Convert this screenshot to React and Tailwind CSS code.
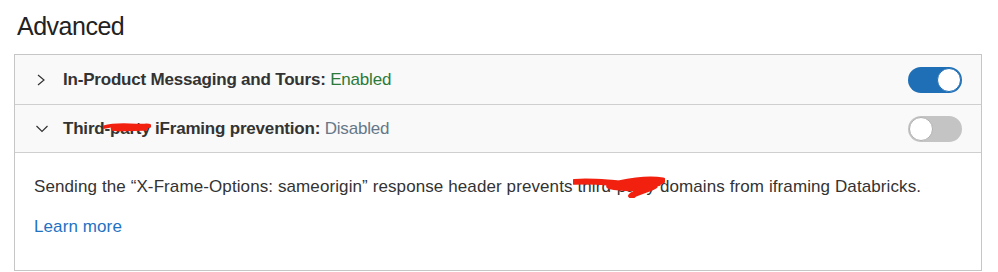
import { useState } from 'react';

function Toggle({ on }) {
  return (
    <div
      className={`w-[54px] h-[26px] rounded-full relative shrink-0 ${
        on ? 'bg-[#1f6fb6]' : 'bg-[#c4c4c4]'
      }`}
    >
      <div
        className={`absolute top-[1px] w-[24px] h-[24px] rounded-full bg-white border ${
          on ? 'right-[1px] border-[#1f6fb6]' : 'left-[1px] border-[#b0b0b0]'
        }`}
      />
    </div>
  );
}

function Scribble({ className, heavy }) {
  return (
    <svg className={`absolute pointer-events-none ${className}`} viewBox="0 0 100 30" preserveAspectRatio="none">
      {heavy ? (
        <path
          d="M2 8 C 20 6, 35 9, 50 10 C 65 6, 85 3, 97 6 C 90 12, 70 14, 40 14 C 55 18, 75 17, 88 14 C 80 20, 68 22, 64 27 M55 12 C 70 10, 85 9, 92 10"
          fill="none"
          stroke="#f2200f"
          strokeWidth="8"
          strokeLinecap="round"
          strokeLinejoin="round"
        />
      ) : (
        <path
          d="M2 12 C 20 6, 45 6, 70 8 C 85 9, 95 6, 98 9 C 80 14, 50 13, 20 16 C 40 19, 70 17, 90 16"
          fill="none"
          stroke="#f2200f"
          strokeWidth="8"
          strokeLinecap="round"
          strokeLinejoin="round"
        />
      )}
    </svg>
  );
}

function Chevron({ open }) {
  return (
    <svg width="12" height="12" viewBox="0 0 12 12" className="shrink-0">
      {open ? (
        <path d="M0.5 3 L6 8.5 L11.5 3" fill="none" stroke="#333" strokeWidth="1.2" />
      ) : (
        <path d="M2 1 L8 6 L2 11" fill="none" stroke="#333" strokeWidth="1.2" />
      )}
    </svg>
  );
}

export default function App() {
  const [rows] = useState([
    { title: 'In-Product Messaging and Tours', status: 'Enabled', on: true, open: false },
    { title: 'Third-party iFraming prevention', status: 'Disabled', on: false, open: true },
  ]);

  return (
    <div className="w-[998px] h-[272px] bg-white pl-[14px] pr-[16px] pt-[10px] font-['Liberation_Sans',Arial,sans-serif] text-[#333]">
      <h2 className="text-[25px] font-light leading-[32px] pl-[3px] text-[#222] tracking-[-0.5px]">Advanced</h2>
      <div className="mt-[12px] border border-[#c6c6c6] h-[217px]">
        {rows.map((r, i) => (
          <div key={i}>
            <div
              className={`h-[49px] bg-[#f9f9f9] flex items-center pl-[21px] pr-[19px] ${
                i > 0 ? 'border-t border-[#cfcfcf]' : ''
              } ${r.open ? 'border-b border-[#cfcfcf]' : ''}`}
            >
              <Chevron open={r.open} />
              <div className="ml-[15px] text-[17px] tracking-[-0.2px] font-bold flex-1">
                {i === 1 ? (
                  <span className="relative">
                    Third-party
                    <Scribble className="left-[40px] top-[3px] w-[48px] h-[13px]" />
                  </span>
                ) : (
                  r.title
                )}
                {i === 1 ? ' iFraming prevention' : ''}:{' '}
                <span className={`font-normal ${r.on ? 'text-[#2b7a3a]' : 'text-[#667788]'}`}>{r.status}</span>
              </div>
              <Toggle on={r.on} />
            </div>
            {r.open && (
              <div className="pl-[19px] pt-[24px] text-[17px] tracking-[0.1px] leading-[20px]">
                <p>
                  Sending the “X-Frame-Options: sameorigin” response header prevents{' '}
                  <span className="relative">
                    third-party
                    <Scribble heavy className="left-[-4px] top-[-1px] w-[92px] h-[22px]" />
                  </span>{' '}
                  domains from iframing Databricks.
                </p>
                <a href="#" className="block mt-[20px] text-[#2272c3]">Learn more</a>
              </div>
            )}
          </div>
        ))}
      </div>
    </div>
  );
}
